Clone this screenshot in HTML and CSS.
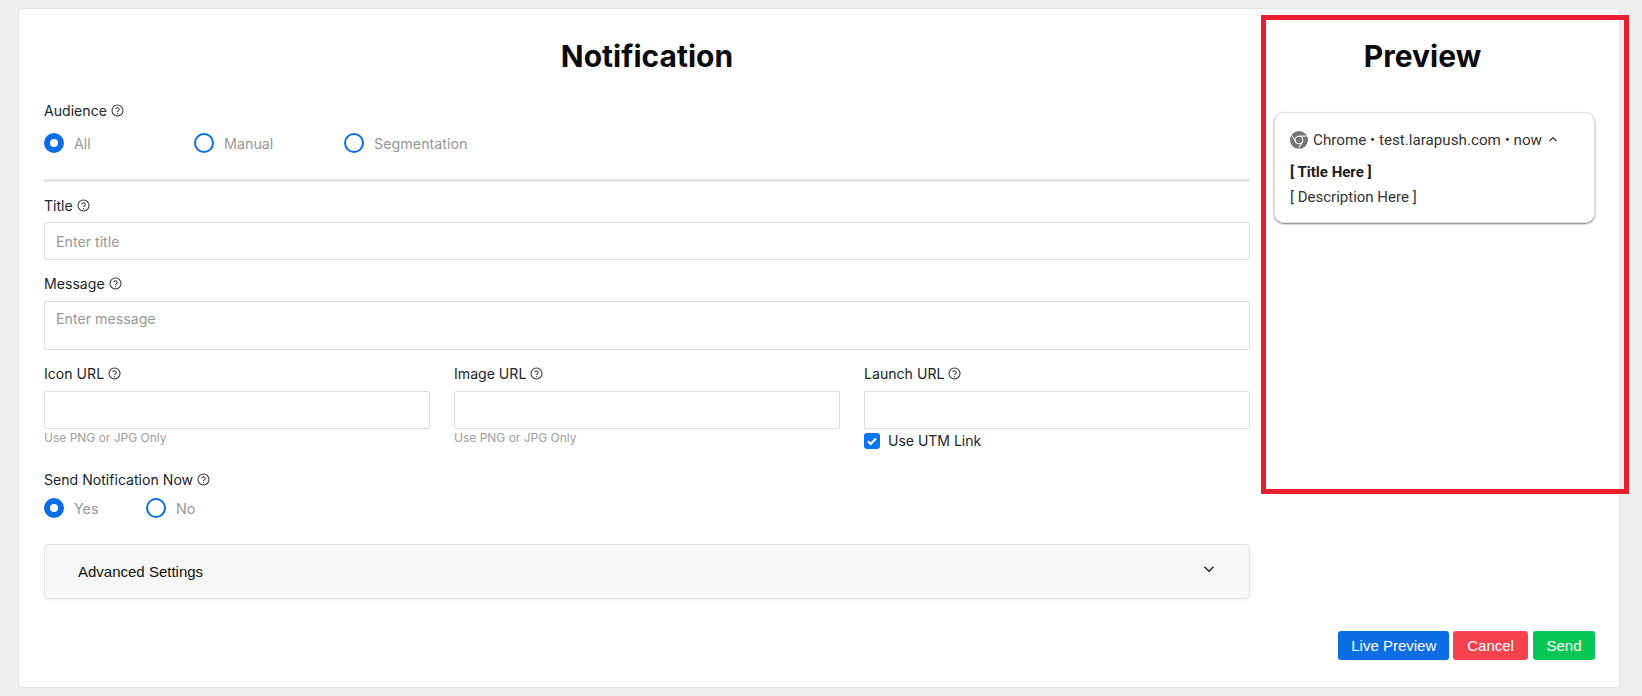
FILE: index.html
```html
<!DOCTYPE html>
<html lang="en">
<head>
<meta charset="utf-8">
<title>Notification</title>
<link rel="stylesheet" href="styles.css">
</head>
<body>
<svg class="defs" width="0" height="0" aria-hidden="true">
  <symbol id="help" viewBox="0 0 24 24">
    <circle cx="12" cy="12" r="10.2" fill="none" stroke="currentColor" stroke-width="1.9"/>
    <path d="M8.6 9.6a3.4 3.4 0 0 1 6.7.6c0 2.2-3.3 2.6-3.3 4.6" fill="none" stroke="currentColor" stroke-width="1.9"/>
    <circle cx="12" cy="17.6" r="1.2" fill="currentColor"/>
  </symbol>
</svg>
<main class="card">
  <div class="columns">
    <section class="form">
      <h1 class="heading">Notification</h1>
      <div class="label">Audience <svg class="help"><use href="#help"/></svg></div>
      <div class="radios radios-wide">
        <label class="radio"><span class="dot on"></span><span class="radio-text">All</span></label>
        <label class="radio"><span class="dot"></span><span class="radio-text">Manual</span></label>
        <label class="radio"><span class="dot"></span><span class="radio-text">Segmentation</span></label>
      </div>
      <hr class="rule">
      <div class="label">Title <svg class="help"><use href="#help"/></svg></div>
      <div class="input placeholder">Enter title</div>
      <div class="label label-next">Message <svg class="help"><use href="#help"/></svg></div>
      <div class="input textarea placeholder">Enter message</div>
      <div class="url-grid">
        <div>
          <div class="label">Icon URL <svg class="help"><use href="#help"/></svg></div>
          <div class="input"></div>
          <div class="hint">Use PNG or JPG Only</div>
        </div>
        <div>
          <div class="label">Image URL <svg class="help"><use href="#help"/></svg></div>
          <div class="input"></div>
          <div class="hint">Use PNG or JPG Only</div>
        </div>
        <div>
          <div class="label">Launch URL <svg class="help"><use href="#help"/></svg></div>
          <div class="input"></div>
          <label class="check">
            <span class="box"><svg viewBox="0 0 16 16" width="16" height="16"><path d="M4 8.4l2.7 2.6L12 5.6" fill="none" stroke="#fff" stroke-width="2.2"/></svg></span>Use UTM Link
          </label>
        </div>
      </div>
      <div class="label">Send Notification Now <svg class="help"><use href="#help"/></svg></div>
      <div class="radios radios-narrow">
        <label class="radio"><span class="dot on"></span><span class="radio-text">Yes</span></label>
        <label class="radio"><span class="dot"></span><span class="radio-text">No</span></label>
      </div>
      <div class="accordion">
        <span>Advanced Settings</span>
        <svg class="chevron" viewBox="0 0 16 16" width="16" height="16"><path d="M3.5 5.8L8 10.2l4.5-4.4" fill="none" stroke="#212529" stroke-width="1.4"/></svg>
      </div>
    </section>
    <aside class="preview">
      <h2 class="heading">Preview</h2>
      <div class="push">
        <div class="push-head">
          <svg class="chrome" viewBox="0 0 18 18" width="18" height="18">
            <circle cx="9" cy="9" r="9" fill="#757575"/>
            <circle cx="9" cy="9" r="3.9" fill="#757575" stroke="#fff" stroke-width="1"/>
            <path d="M9 5.1h7.6M5.7 11L1.9 4.4M12.4 11L8.5 17.6" stroke="#fff" stroke-width="1" fill="none"/>
          </svg>
          <span>Chrome • test.larapush.com • now</span>
          <svg class="caret" viewBox="0 0 10 6" width="10" height="6"><path d="M1.5 5L5 1.6 8.5 5" fill="none" stroke="#333" stroke-width="1.1"/></svg>
        </div>
        <div class="push-title">[ Title Here ]</div>
        <div class="push-body">[ Description Here ]</div>
      </div>
    </aside>
  </div>
  <div class="actions">
    <button class="btn blue">Live Preview</button>
    <button class="btn red">Cancel</button>
    <button class="btn green">Send</button>
  </div>
  <div class="annotation"></div>
</main>
</body>
</html>
```
FILE: styles.css
```css
* { box-sizing: border-box; }
html, body { height: 100%; }
body {
  margin: 0;
  padding: 8px 22px 8px 18px;
  background: #eee;
  font-family: Inter, "Liberation Sans", sans-serif;
  font-size: 14px;
  color: #212529;
  overflow: hidden;
}
.defs { position: absolute; }
.card {
  position: relative;
  height: 680px;
  padding: 0 24px 0 25px;
  background: #fff;
  border: 1px solid #e4e4e4;
  border-radius: 4px;
}
.columns { display: flex; height: 622px; }
.form { flex: 0 0 1206px; }
.preview { flex: 1; }
.heading {
  margin: 0;
  height: 78px;
  padding-top: 30px;
  font-size: 30px;
  line-height: 34px;
  font-weight: 700;
  color: #0b0b0b;
  text-align: center;
}
.form > .heading { height: 91px; }
.label {
  display: flex;
  align-items: center;
  gap: 4px;
  height: 20px;
  font-size: 14.1px;
  color: #212529;
}
.help { width: 13px; height: 13px; color: #333; }
.radios { display: flex; align-items: center; margin-top: 13px; }
.radios-wide .radio { width: 150px; }
.radios-narrow { margin-top: 9px; }
.radios-narrow .radio:first-child { width: 102px; }
.radio {
  display: flex;
  align-items: center;
  gap: 10px;
  color: #999;
  font-size: 14.3px;
  line-height: 20px;
}
.radio-text { position: relative; top: 1px; }
.dot {
  width: 20px;
  height: 20px;
  border: 2px solid #0b6de6;
  border-radius: 50%;
  background: #fff;
}
.dot.on { border: 6px solid #0b6de6; }
.rule {
  margin: 26px 0 13px;
  height: 3px;
  border: 0;
  background: #e5e5e5;
}
.input {
  height: 38px;
  margin-top: 7px;
  padding: 0 11px;
  border: 1px solid #ddd;
  border-radius: 2px;
  background: #fff;
  line-height: 38px;
}
.placeholder { color: #999; font-size: 14.2px; }
.textarea { height: 49px; margin-top: 8px; line-height: 34px; }
.label-next { margin-top: 13px; }
.url-grid {
  display: grid;
  grid-template-columns: repeat(3, 1fr);
  column-gap: 24px;
  margin-top: 13px;
  height: 106px;
}
.url-grid .input { margin-top: 8px; }
.hint { margin-top: 1px; font-size: 12px; line-height: 16px; color: #a0a0a0; }
.check { display: flex; align-items: center; gap: 8px; margin-top: 4px; line-height: 16px; }
.box {
  width: 16px;
  height: 16px;
  border-radius: 3px;
  background: #0b74f0;
}
.box svg { display: block; }
.accordion {
  display: flex;
  align-items: center;
  justify-content: space-between;
  height: 55px;
  margin-top: 26px;
  padding: 0 32px 0 33px;
  background: #f7f7f7;
  border: 1px solid #e2e2e2;
  border-radius: 4px;
  box-shadow: 0 2px 6px rgba(0, 0, 0, .05);
  font-family: "Liberation Sans", Arial, sans-serif;
  font-size: 15px;
  color: #111;
}
.chevron { margin-top: -6px; }
.push {
  margin: 25px 0 0 24px;
  height: 111px;
  padding: 18px 15px;
  border: 1px solid #ddd;
  border-radius: 10px;
  box-shadow: 0 1px 2px rgba(0, 0, 0, .55);
  font-family: Roboto, sans-serif;
  font-size: 15px;
  color: #333;
}
.push-head { display: flex; align-items: center; height: 18px; font-size: 15.2px; }
.chrome { margin-right: 5px; }
.caret { margin: -2px 0 0 6px; }
.push-title { margin-top: 14px; line-height: 18px; font-weight: 700; color: #1b1b1b; }
.push-body { margin-top: 7px; line-height: 18px; }
.actions {
  display: flex;
  justify-content: flex-end;
  gap: 4px;
}
.btn {
  height: 29px;
  padding: 0 13px;
  border: 0;
  border-radius: 3px;
  color: #fff;
  font-family: "Liberation Sans", Arial, sans-serif;
  font-size: 15px;
}
.blue { background: #0b6de6; }
.red { background: #f4424f; margin-right: 1px; padding: 0 14px; }
.green { background: #06c755; padding: 0 13.5px; }
.annotation {
  position: absolute;
  left: 1242px;
  top: 6px;
  width: 368px;
  height: 479px;
  border: 5px solid #e81f2c;
  pointer-events: none;
}
```
